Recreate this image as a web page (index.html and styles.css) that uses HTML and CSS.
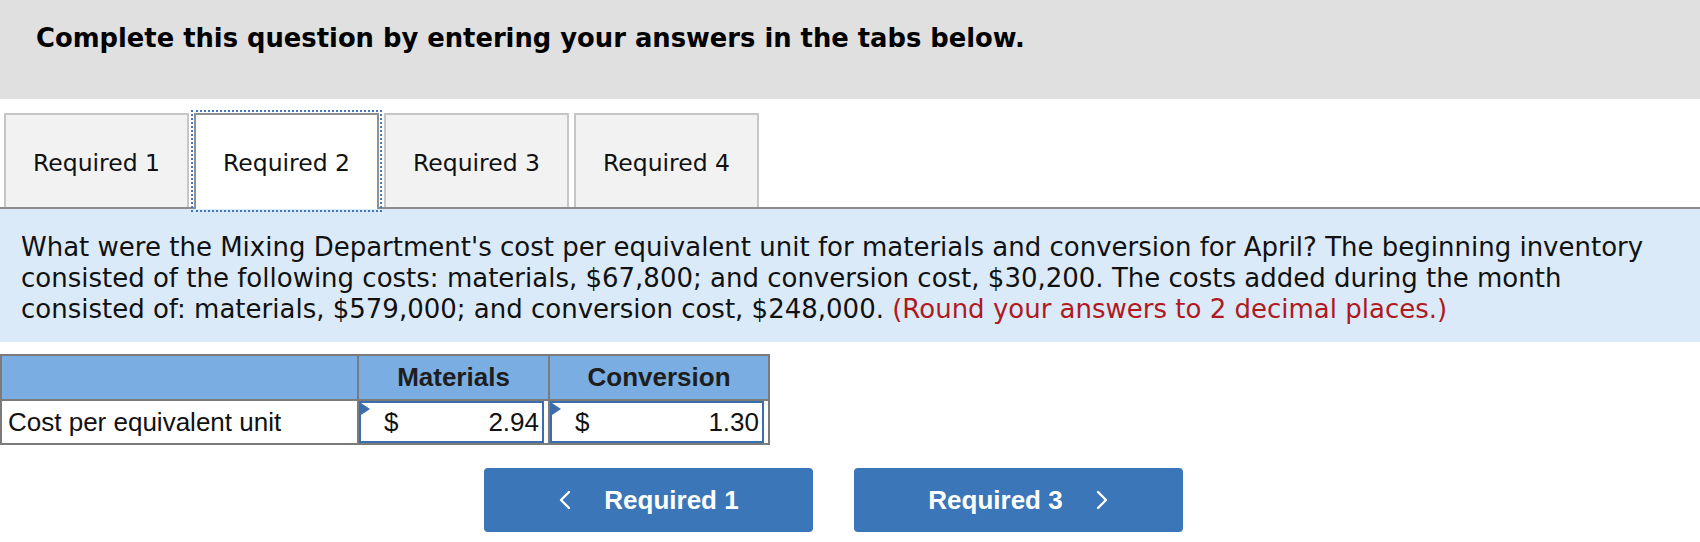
FILE: index.html
```html
<!DOCTYPE html>
<html>
<head>
<meta charset="utf-8">
<link rel="stylesheet" href="styles.css">
</head>
<body>
<div class="header">
  <h1 class="title">Complete this question by entering your answers in the tabs below.</h1>
</div>
<div class="tabs">
  <div class="tab">Required 1</div>
  <div class="tab active">Required 2</div>
  <div class="tab">Required 3</div>
  <div class="tab">Required 4</div>
</div>
<div class="question">
  <p class="qtext">What were the Mixing Department's cost per equivalent unit for materials and conversion for April? The beginning inventory consisted of the following costs: materials, $67,800; and conversion cost, $30,200. The costs added during the month consisted of: materials, $579,000; and conversion cost, $248,000. <span class="hint">(Round your answers to 2 decimal places.)</span></p>
</div>
<table class="grid">
  <colgroup>
    <col class="c1"><col class="c2"><col class="c3">
  </colgroup>
  <thead>
    <tr class="head">
      <th></th>
      <th>Materials</th>
      <th>Conversion</th>
    </tr>
  </thead>
  <tbody>
    <tr class="row">
      <td class="label">Cost per equivalent unit</td>
      <td class="incell"><div class="field"><span class="mark"></span><span class="cur">$</span><span class="val">2.94</span></div></td>
      <td class="incell"><div class="field"><span class="mark"></span><span class="cur">$</span><span class="val">1.30</span></div></td>
    </tr>
  </tbody>
</table>
<div class="nav">
  <div class="btn">
    <svg class="chev" width="14" height="20" viewBox="0 0 14 20"><path d="M11 2 L3 10 L11 18" fill="none" stroke="#fff" stroke-width="2.4" stroke-linecap="round" stroke-linejoin="round"/></svg>
    <span class="btxt">Required 1</span>
  </div>
  <div class="btn">
    <span class="btxt">Required 3</span>
    <svg class="chev" width="14" height="20" viewBox="0 0 14 20"><path d="M3 2 L11 10 L3 18" fill="none" stroke="#fff" stroke-width="2.4" stroke-linecap="round" stroke-linejoin="round"/></svg>
  </div>
</div>
</body>
</html>
```
FILE: styles.css
```css
html, body {
  margin: 0;
  padding: 0;
  background: #ffffff;
}
body {
  width: 1700px;
  height: 542px;
  overflow: hidden;
  font-family: "DejaVu Sans", Verdana, sans-serif;
  color: #111;
}
.header {
  background: #e0e0e0;
  height: 99px;
  box-sizing: border-box;
  padding: 23px 0 0 36px;
}
.title {
  margin: 0;
  font-size: 25.8px;
  font-weight: bold;
  line-height: 30px;
  color: #000;
}
.tabs {
  display: flex;
  gap: 5px;
  padding: 14px 0 0 4px;
  border-bottom: 2px solid #8c8c8c;
  height: 94px;
}
.tab {
  width: 185px;
  height: 94px;
  box-sizing: border-box;
  border: 2px solid #c6c6c6;
  border-bottom: none;
  background: #f2f2f2;
  display: flex;
  align-items: center;
  justify-content: center;
  padding-top: 4px;
  font-size: 23.5px;
  color: #111;
}
.tab.active {
  background: #ffffff;
  border-color: #8f8f8f;
  height: 96px;
  padding-bottom: 2px;
  margin-bottom: -2px;
  outline: 2px dotted #3f78c0;
  outline-offset: 1px;
  position: relative;
}
.question {
  background: #dbeaf8;
  padding: 23px 20px 18px 21px;
}
.qtext {
  margin: 0;
  font-size: 26px;
  line-height: 30.8px;
  color: #111;
}
.hint {
  color: #b0191e;
}
.grid {
  margin-top: 12px;
  border-collapse: collapse;
  width: 768px;
  table-layout: fixed;
  font-family: "Liberation Sans", Arial, sans-serif;
  font-size: 26px;
  color: #111;
}
.c1 { width: 357px; }
.c2 { width: 191px; }
.c3 { width: 220px; }
.grid th, .grid td {
  border: 2px solid #7b7b7b;
  padding: 0;
}
.head th {
  background: #7aade2;
  height: 43px;
  font-weight: bold;
  text-align: center;
  color: #1e1e1e;
}
.row td {
  height: 42px;
}
.label {
  padding-left: 6px !important;
  text-align: left;
}
.field {
  position: relative;
  box-sizing: border-box;
  height: 42px;
  margin-right: 4px;
  border: 2px solid #3c6eaf;
  background: #fff;
  display: flex;
  align-items: center;
  justify-content: space-between;
  padding: 0 3px 0 23px;
}
.mark {
  position: absolute;
  left: 0;
  top: 0;
  width: 0;
  height: 0;
  border-left: 9px solid #3c6eaf;
  border-top: 6px solid transparent;
  border-bottom: 6px solid transparent;
}
.nav {
  display: flex;
  gap: 41px;
  padding-left: 484px;
  margin-top: 23px;
}
.btn {
  width: 329px;
  height: 64px;
  box-sizing: border-box;
  background: #3a76b8;
  border-radius: 4px;
  display: flex;
  align-items: center;
  justify-content: center;
  gap: 32px;
  color: #fff;
  font-family: "Liberation Sans", Arial, sans-serif;
  font-weight: bold;
  font-size: 26px;
}
.chev {
  display: block;
}
```
